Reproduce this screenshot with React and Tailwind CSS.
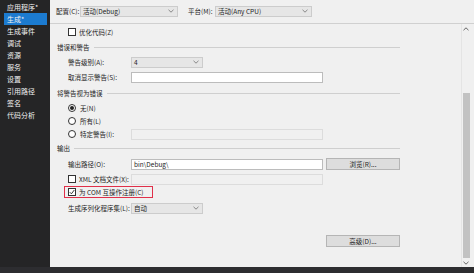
import React from 'react'

const font = { fontFamily: '"Noto Sans CJK SC", "Noto Sans", sans-serif' }

const navItems = ['应用程序*', '生成*', '生成事件', '调试', '资源', '服务', '设置', '引用路径', '签名', '代码分析']

function Chevron() {
  return (
    <svg width="6" height="4" viewBox="0 0 6 4" className="shrink-0">
      <path d="M0.5 0.8 L3 3.2 L5.5 0.8" fill="none" stroke="#707070" strokeWidth="0.8" />
    </svg>
  )
}

function Select({ value, className }) {
  return (
    <div className={`flex h-[11px] shrink-0 items-center justify-between border border-[#cccccc] bg-[#e6e6e6] pl-[2px] pr-[3px] ${className}`}>
      <span>{value}</span>
      <Chevron />
    </div>
  )
}

function Checkbox({ checked }) {
  return (
    <span className="flex h-[8px] w-[8px] shrink-0 items-center justify-center border border-[#333333] bg-white">
      {checked && (
        <svg width="6" height="6" viewBox="0 0 6 6">
          <path d="M0.8 3.2 L2.4 4.8 L5.3 1" fill="none" stroke="#222222" strokeWidth="0.9" />
        </svg>
      )}
    </span>
  )
}

function Radio({ checked }) {
  return (
    <span className="flex h-[8px] w-[8px] shrink-0 items-center justify-center rounded-full border border-[#333333] bg-white">
      {checked && <span className="h-[4px] w-[4px] rounded-full bg-[#222222]" />}
    </span>
  )
}

function Header({ title, h }) {
  return (
    <div className={`flex items-center gap-[4px] pl-[7px] pr-[58px] ${h}`}>
      <span>{title}</span>
      <div className="h-px flex-1 bg-[#cfcfcf]" />
    </div>
  )
}

function Row({ h, children }) {
  return <div className={`flex items-center pl-[18px] ${h}`}>{children}</div>
}

function Label({ w, children }) {
  return <span className={`shrink-0 ${w}`}>{children}</span>
}

export default function App() {
  return (
    <div className="flex h-[273px] w-[474px] flex-col overflow-hidden whitespace-nowrap bg-[#2d2d30] text-[6.5px] leading-none text-[#1e1e1e]" style={font}>
      <div className="flex h-[267px]">
        <nav className="w-[50px] shrink-0 bg-[#252526] pt-[1px] text-[7px] text-[#f1f1f1]">
          {navItems.map((item, i) => (
            <div
              key={item}
              className={`flex h-[12px] items-center ${i === 1 ? 'mr-[3px] ml-[4px] pl-[3px] bg-[#1c7bd0]' : 'pl-[7px]'}`}
            >
              {item}
            </div>
          ))}
        </nav>

        <main className="flex flex-1 flex-col bg-[#f0f0f0]">
          <div className="flex h-[24px] items-center border-b border-[#d0d0d0] pb-[1px] pl-[6px]">
            <Label w="w-[24px]">配置(C):</Label>
            <Select value="活动(Debug)" className="w-[98px]" />
            <Label w="ml-[10px] w-[27px]">平台(M):</Label>
            <Select value="活动(Any CPU)" className="w-[97px]" />
          </div>

          <div className="flex flex-1">
            <div className="flex w-[408px] flex-col">
              <Row h="h-[16px]">
                <Checkbox />
                <span className="ml-[3px]">优化代码(Z)</span>
              </Row>

              <Header title="错误和警告" h="h-[14px]" />

              <Row h="h-[16px]">
                <Label w="w-[63px]">警告级别(A):</Label>
                <Select value="4" className="w-[72px]" />
              </Row>
              <Row h="h-[14px]">
                <Label w="w-[63px]">取消显示警告(S):</Label>
                <div className="h-[11px] w-[192px] shrink-0 border border-[#bcbcbc] bg-white" />
              </Row>

              <Header title="将警告视为错误" h="h-[18px]" />

              <Row h="h-[12px]">
                <Radio checked />
                <span className="ml-[4px]">无(N)</span>
              </Row>
              <Row h="h-[14px]">
                <Radio />
                <span className="ml-[4px]">所有(L)</span>
              </Row>
              <Row h="h-[12px]">
                <Radio />
                <Label w="ml-[4px] w-[51px]">特定警告(I):</Label>
                <div className="h-[11px] w-[192px] shrink-0 border border-[#dcdcdc] bg-[#f0f0f0]" />
              </Row>

              <Header title="输出" h="h-[16px]" />

              <Row h="h-[16px]">
                <Label w="w-[63px]">输出路径(O):</Label>
                <div className="flex h-[11px] w-[192px] shrink-0 items-center border border-[#bcbcbc] bg-white pl-[2px]">bin\Debug\</div>
                <button className="ml-[3px] flex h-[12px] w-[74px] shrink-0 items-center justify-center border border-[#b5b5b5] bg-[#dddddd]">
                  浏览(R)...
                </button>
              </Row>
              <Row h="h-[14px]">
                <Checkbox />
                <Label w="ml-[3px] w-[52px]">XML 文档文件(X):</Label>
                <div className="h-[11px] w-[192px] shrink-0 border border-[#dcdcdc] bg-[#f0f0f0]" />
              </Row>
              <div className="flex h-[12px] items-center pl-[14px]">
                <div className="flex h-[12px] w-[89px] items-center border border-[#e0304a] pl-[3px]">
                  <Checkbox checked />
                  <span className="ml-[3px]">为 COM 互操作注册(C)</span>
                </div>
              </div>
              <Row h="h-[20px]">
                <Label w="w-[63px]">生成序列化程序集(L):</Label>
                <Select value="自动" className="w-[72px]" />
              </Row>

              <div className="mt-[17px] flex pl-[276px]">
                <button className="flex h-[12px] w-[74px] items-center justify-center border border-[#b5b5b5] bg-[#dddddd]">
                  高级(D)...
                </button>
              </div>
            </div>

            <div className="ml-auto mr-[4px] flex w-[9px] flex-col items-center border-l border-[#e4e4e4] pt-[3px] pb-[2px]">
              <svg width="6" height="4" viewBox="0 0 6 4">
                <path d="M0.5 3.2 L3 0.8 L5.5 3.2" fill="none" stroke="#555555" strokeWidth="0.9" />
              </svg>
              <div className="mt-[62px] w-[7px] flex-1 bg-[#c2c2c2]" />
              <svg width="6" height="4" viewBox="0 0 6 4" className="mt-[3px]">
                <path d="M0.5 0.8 L3 3.2 L5.5 0.8" fill="none" stroke="#555555" strokeWidth="0.9" />
              </svg>
            </div>
          </div>
        </main>
      </div>
    </div>
  )
}
